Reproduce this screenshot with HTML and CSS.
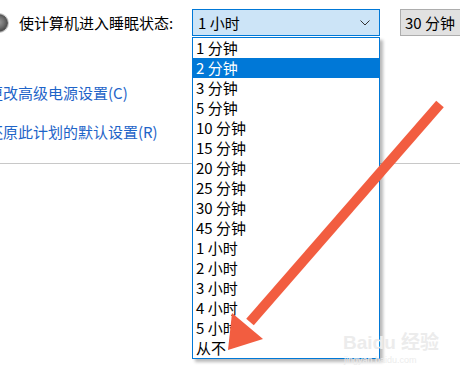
FILE: index.html
```html
<!DOCTYPE html>
<html lang="zh-CN">
<head>
<meta charset="utf-8">
<link rel="stylesheet" href="styles.css">
</head>
<body>
<div class="page">
  <div class="row">
    <span class="radio"></span>
    <span class="label">使计算机进入睡眠状态:</span>
    <div class="combo-wrap">
      <div class="combo">
        <span>1 小时</span>
        <svg class="chev" width="10" height="6" viewBox="0 0 10 6"><path d="M0.5 0.5 L5 5 L9.5 0.5" fill="none" stroke="#333" stroke-width="1"/></svg>
      </div>
      <ul class="list">
        <li>1 分钟</li>
        <li class="sel">2 分钟</li>
        <li>3 分钟</li>
        <li>5 分钟</li>
        <li>10 分钟</li>
        <li>15 分钟</li>
        <li>20 分钟</li>
        <li>25 分钟</li>
        <li>30 分钟</li>
        <li>45 分钟</li>
        <li>1 小时</li>
        <li>2 小时</li>
        <li>3 小时</li>
        <li>4 小时</li>
        <li>5 小时</li>
        <li>从不</li>
      </ul>
    </div>
    <div class="box">30 分钟</div>
  </div>
  <div class="links">
    <a class="link">更改高级电源设置(C)</a>
    <a class="link">还原此计划的默认设置(R)</a>
  </div>
  <div class="rule"></div>
  <div class="watermark">
    <div class="wm-big">Baidu 经验</div>
    <div class="wm-small">jingyan.baidu.com</div>
  </div>
  <svg class="arrow" width="460" height="381" viewBox="0 0 460 381">
    <line x1="440" y1="104" x2="250" y2="322" stroke="#f25d40" stroke-width="10"/>
    <polygon points="228,350 232,313 263,339" fill="#f25d40"/>
  </svg>
</div>
</body>
</html>
```
FILE: styles.css
```css
html, body {
  margin: 0;
  padding: 0;
  background: #fff;
}
.page {
  position: relative;
  width: 460px;
  height: 381px;
  overflow: hidden;
  font-family: "Noto Sans CJK SC", "Microsoft YaHei", sans-serif;
  font-size: 15px;
  color: #000;
}
.row {
  display: flex;
  align-items: center;
  padding-top: 9px;
  height: 27px;
}
.radio {
  flex: none;
  width: 16px;
  height: 16px;
  margin-left: -10px;
  border-radius: 50%;
  border: 1px solid #555;
  background: radial-gradient(circle at 50% 45%, #9a9a9a 0, #6e6e6e 45%, #4a4a4a 75%, #8a8a8a 100%);
  box-shadow: 0 0 0 1px #c8c8c8;
}
.label {
  flex: none;
  width: 173px;
  margin-left: 11px;
  line-height: 27px;
  white-space: nowrap;
}
.combo-wrap {
  position: relative;
  flex: none;
  width: 188px;
  height: 27px;
}
.combo {
  box-sizing: border-box;
  height: 27px;
  border: 1px solid #0078d7;
  background: #cce4f7;
  display: flex;
  align-items: center;
  justify-content: space-between;
  padding: 0 9px 0 5px;
  line-height: 25px;
}
.chev {
  display: block;
}
.list {
  position: absolute;
  top: 28px;
  left: 0;
  width: 188px;
  box-sizing: border-box;
  margin: 0;
  padding: 0;
  list-style: none;
  border: 1px solid #0078d7;
  background: #fff;
  box-shadow: 3px 3px 3px rgba(0, 0, 0, 0.28);
  z-index: 2;
}
.list li {
  height: 20px;
  line-height: 20px;
  padding-left: 3px;
  white-space: nowrap;
}
.list li.sel {
  background: #0078d7;
  color: #fff;
}
.box {
  flex: none;
  box-sizing: border-box;
  margin-left: 20px;
  width: 80px;
  height: 27px;
  line-height: 25px;
  padding-left: 4px;
  border: 1px solid #adadad;
  background: #e1e1e1;
  white-space: nowrap;
}
.links {
  display: flex;
  flex-direction: column;
  gap: 19px;
  margin-top: 47px;
  margin-left: -12px;
}
.link {
  color: #1e64c8;
  line-height: 20px;
  white-space: nowrap;
}
.rule {
  margin-top: 21px;
  height: 1px;
  background: #c8c8c8;
}
.watermark {
  position: absolute;
  left: 343px;
  top: 332px;
  color: #ececec;
  font-family: "Liberation Sans", "Noto Sans CJK SC", sans-serif;
  white-space: nowrap;
  z-index: 3;
}
.wm-big {
  font-size: 19px;
  font-weight: bold;
  line-height: 22px;
}
.wm-small {
  font-size: 9px;
  line-height: 12px;
  margin-left: 1px;
}
.arrow {
  position: absolute;
  left: 0;
  top: 0;
  z-index: 4;
}
```
